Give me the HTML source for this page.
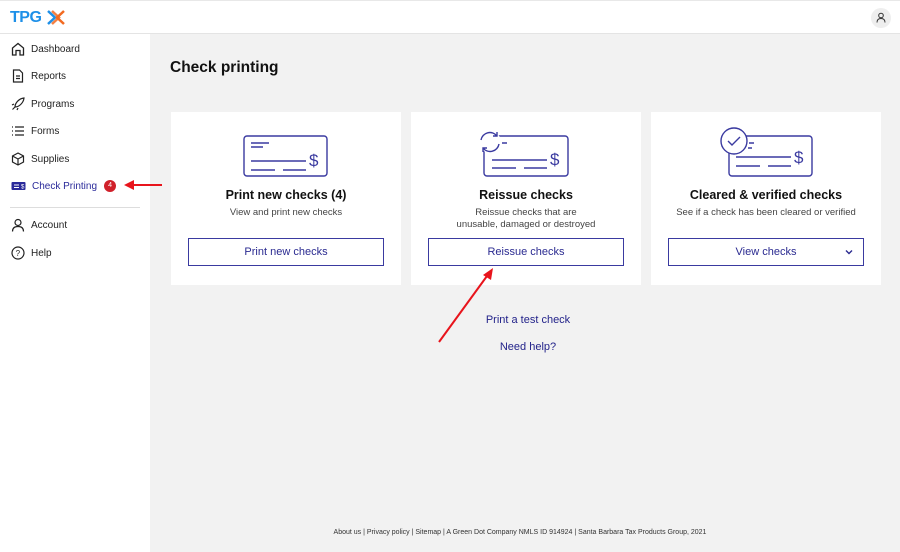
<!DOCTYPE html>
<html><head><meta charset="utf-8"><style>
*{margin:0;padding:0;box-sizing:border-box}
body{width:900px;height:552px;overflow:hidden;background:#f2f2f2;font-family:"Liberation Sans",sans-serif;position:relative}
.hdr{position:absolute;left:0;top:0;width:900px;height:34px;background:#fff;border-bottom:1px solid #e4e4e4;border-top:1px solid #e8e8e8}
.side{position:absolute;left:0;top:34px;width:150px;height:518px;background:#fff}
.nav{position:absolute;left:11px;font-size:10px;color:#222;display:flex;align-items:center}
.nav svg{margin-right:6px}
.card{position:absolute;top:112px;width:230px;height:173px;background:#fff;text-align:center}
.card h3{position:absolute;top:76px;width:100%;font-size:12.5px;color:#111;font-weight:bold}
.card p{position:absolute;top:95px;width:100%;font-size:9.5px;color:#444;line-height:11.5px}
.btn{position:absolute;left:17px;top:126px;width:196px;height:28px;border:1px solid #3a3aa0;color:#2a2a90;font-size:11px;line-height:26px}
.ic{position:absolute;left:72px;top:22px}
.lnk{position:absolute;font-size:11px;color:#23238a;width:200px;text-align:center}
</style></head><body>
<div class="hdr">
<div style="position:absolute;left:10px;top:8px;font-size:16px;font-weight:bold;color:#1e90e8;letter-spacing:-0.5px">TPG</div>
<svg style="position:absolute;left:46px;top:8px" width="20" height="17" viewBox="0 0 20 17"><path d="M2 2l7 6.5-7 6.5" stroke="#1e90e8" stroke-width="2.5" fill="none"/><path d="M18 2l-7 6.5 7 6.5" stroke="#f26a21" stroke-width="2.5" fill="none"/><path d="M6 2l7 6.5-7 6.5" stroke="#f26a21" stroke-width="2.5" fill="none" opacity=".85"/></svg>
<div style="position:absolute;left:871px;top:7px;width:20px;height:20px;border-radius:50%;background:#eee"></div>
<svg style="position:absolute;left:876px;top:11px" width="10" height="11" viewBox="0 0 10 11"><circle cx="5" cy="3.5" r="2.3" stroke="#333" fill="none"/><path d="M1 10.5c0-3 2-4 4-4s4 1 4 4" stroke="#333" fill="none"/></svg>
</div>
<div class="side">
<div class="nav" style="top:8px"><svg width="14" height="14" viewBox="0 0 14 14"><path d="M1.5 13V6L7 1.5 12.5 6V13H9V8.5H5V13Z" stroke="#222" stroke-width="1.3" fill="none"/></svg>Dashboard</div>
<div class="nav" style="top:35px"><svg width="14" height="14" viewBox="0 0 14 14"><path d="M2.5 1h6l3 3v9h-9Z M5 7h4M5 9.5h4" stroke="#222" stroke-width="1.2" fill="none"/></svg>Reports</div>
<div class="nav" style="top:63px"><svg width="14" height="14" viewBox="0 0 14 14"><path d="M4 10C4 6 8 1.5 13 1c-.5 5-5 9-9 9ZM4 10l-2.5 2.5M3 7L1 8M7 11l-1 2" stroke="#222" stroke-width="1.2" fill="none"/></svg>Programs</div>
<div class="nav" style="top:90px"><svg width="14" height="14" viewBox="0 0 14 14"><path d="M1 3h1M4 3h9M1 7h1M4 7h9M1 11h1M4 11h9" stroke="#222" stroke-width="1.2"/></svg>Forms</div>
<div class="nav" style="top:118px"><svg width="14" height="14" viewBox="0 0 14 14"><path d="M7 1l5.5 3v6L7 13 1.5 10V4ZM1.5 4L7 7l5.5-3M7 7v6" stroke="#222" stroke-width="1.2" fill="none"/></svg>Supplies</div>
<div class="nav" style="top:146px;color:#2a2a9a"><svg width="15" height="12" viewBox="0 0 15 12"><rect x="0.5" y="2" width="14" height="8" rx="1" fill="#2a2a9a"/><path d="M3 5h5M3 7.5h5" stroke="#fff"/><text x="10" y="8.5" font-size="6" fill="#fff">$</text></svg>Check Printing<span style="display:inline-block;margin-left:7px;width:12px;height:12px;border-radius:50%;background:#d0202a;color:#fff;font-size:7px;line-height:12px;text-align:center">4</span></div>
<div style="position:absolute;left:10px;top:173px;width:130px;height:1px;background:#ddd"></div>
<div class="nav" style="top:184px"><svg width="14" height="14" viewBox="0 0 14 14"><circle cx="7" cy="4.5" r="3" stroke="#222" stroke-width="1.2" fill="none"/><path d="M1.5 13.5c0-4 2.5-5 5.5-5s5.5 1 5.5 5" stroke="#222" stroke-width="1.2" fill="none"/></svg>Account</div>
<div class="nav" style="top:212px"><svg width="14" height="14" viewBox="0 0 14 14"><circle cx="7" cy="7" r="6" stroke="#222" stroke-width="1.2" fill="none"/><text x="4.6" y="10" font-size="8" fill="#222">?</text></svg>Help</div>
</div>
<div style="position:absolute;left:170px;top:59px;font-size:15.5px;font-weight:bold;color:#111">Check printing</div>

<div class="card" style="left:171px">
<svg class="ic" width="86" height="44" viewBox="0 0 86 44"><rect x="1" y="2" width="83" height="40" rx="3" stroke="#3a3aa0" stroke-width="1.4" fill="none"/><path d="M8 9h18M8 13h12M8 27h55M8 36h24M40 36h23" stroke="#3a3aa0" stroke-width="1.4"/><text x="66" y="32" font-size="17" fill="#3a3aa0" font-family="Liberation Sans">$</text></svg>
<h3>Print new checks (4)</h3><p>View and print new checks</p><div class="btn">Print new checks</div></div>

<div class="card" style="left:411px">
<svg class="ic" style="left:64px;top:16px" width="96" height="50" viewBox="0 0 96 50"><rect x="9" y="8" width="84" height="40" rx="3" stroke="#3a3aa0" stroke-width="1.4" fill="none"/><circle cx="15" cy="14" r="11" fill="#fff"/><path d="M6 12a9 9 0 0 1 16-4M24 16a9 9 0 0 1-16 4M22 4v4h-4M8 24v-4h4" stroke="#3a3aa0" stroke-width="1.4" fill="none"/><path d="M27 15h5M17 32h55M17 40h24M49 40h23" stroke="#3a3aa0" stroke-width="1.4"/><text x="75" y="37" font-size="17" fill="#3a3aa0" font-family="Liberation Sans">$</text></svg>
<h3>Reissue checks</h3><p>Reissue checks that are<br>unusable, damaged or destroyed</p><div class="btn">Reissue checks</div></div>

<div class="card" style="left:651px">
<svg class="ic" style="left:68px;top:14px" width="96" height="52" viewBox="0 0 96 52"><rect x="10" y="10" width="83" height="40" rx="3" stroke="#3a3aa0" stroke-width="1.4" fill="none"/><circle cx="15" cy="15" r="13" fill="#fff" stroke="#3a3aa0" stroke-width="1.4"/><path d="M9 15l4 4 8-8M30 17h5M29 22h4M17 31h55M17 40h24M49 40h23" stroke="#3a3aa0" stroke-width="1.4" fill="none"/><text x="75" y="37" font-size="17" fill="#3a3aa0" font-family="Liberation Sans">$</text></svg>
<h3>Cleared &amp; verified checks</h3><p>See if a check has been cleared or verified</p><div class="btn">View checks<svg style="position:absolute;right:10px;top:10px" width="8" height="6" viewBox="0 0 8 6"><path d="M1 1.5l3 3 3-3" stroke="#2a2a90" stroke-width="1.4" fill="none"/></svg></div></div>

<div class="lnk" style="left:428px;top:314px">Print a test check</div>
<div class="lnk" style="left:428px;top:341px">Need help?</div>
<div style="position:absolute;left:0;width:1040px;top:529px;text-align:center;font-size:7px;color:#333">About us | Privacy policy | Sitemap | A Green Dot Company NMLS ID 914924 | Santa Barbara Tax Products Group, 2021</div>
<svg style="position:absolute;left:0;top:0" width="900" height="552"><path d="M162 185H132" stroke="#e8141c" stroke-width="2"/><path d="M124 185l10-5v10Z" fill="#e8141c"/><path d="M439 342L487 276" stroke="#e8141c" stroke-width="2"/><path d="M493 268l-2 12-8-5Z" fill="#e8141c"/></svg>
</body></html>
